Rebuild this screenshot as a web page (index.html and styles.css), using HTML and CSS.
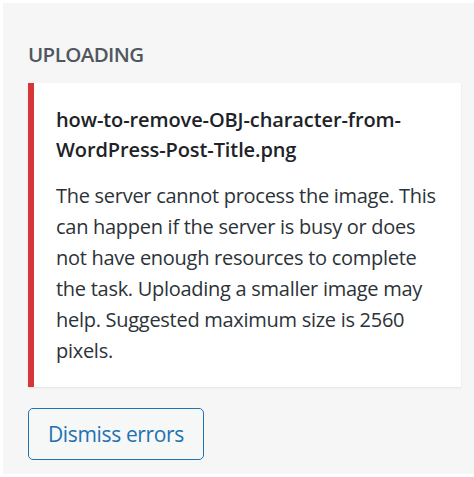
FILE: index.html
```html
<!DOCTYPE html>
<html lang="en">
<head>
<meta charset="utf-8">
<title>Uploading</title>
<link rel="stylesheet" href="styles.css">
</head>
<body>
<div class="panel">
  <h2 class="heading">UPLOADING</h2>
  <div class="error-card">
    <div class="filename">how-to-remove-OBJ-character-from-WordPress-Post-Title.png</div>
    <div class="message">The server cannot process the image. This can happen if the server is busy or does not have enough resources to complete the task. Uploading a smaller image may help. Suggested maximum size is 2560 pixels.</div>
  </div>
  <button class="dismiss" type="button">Dismiss errors</button>
</div>
</body>
</html>
```
FILE: styles.css
```css
html, body {
  margin: 0;
  padding: 0;
  background: #ffffff;
}
body {
  font-family: "Open Sans", "Noto Sans", sans-serif;
  padding: 3px 0 3px 3px;
}
.panel {
  background: #f6f6f6;
  height: 471px;
  box-sizing: border-box;
  padding: 37px 13px 0 25px;
  display: flex;
  flex-direction: column;
  align-items: flex-start;
}
.heading {
  margin: 0;
  font-size: 20.5px;
  line-height: 28px;
  font-weight: 600;
  color: #50575e;
  letter-spacing: -0.6px;
}
.error-card {
  align-self: stretch;
  margin-top: 15px;
  background: #ffffff;
  border-left: 6px solid #d63638;
  box-shadow: 0 1px 2px rgba(0, 0, 0, 0.08);
  padding: 22px 22px 21px 22px;
  height: 304px;
  box-sizing: border-box;
}
.filename {
  font-size: 20px;
  line-height: 30px;
  font-weight: 600;
  color: #1d2327;
  letter-spacing: -0.1px;
}
.message {
  margin-top: 15px;
  font-size: 20px;
  line-height: 31px;
  color: #2c3338;
  letter-spacing: -0.28px;
}
.dismiss {
  margin-top: 21px;
  width: 176px;
  height: 52px;
  box-sizing: border-box;
  background: #f6f7f7;
  border: 1.5px solid #2271b1;
  border-radius: 5px;
  color: #2271b1;
  font-family: "Open Sans", "Noto Sans", sans-serif;
  font-size: 21px;
  letter-spacing: -0.35px;
  padding: 0;
}
```
